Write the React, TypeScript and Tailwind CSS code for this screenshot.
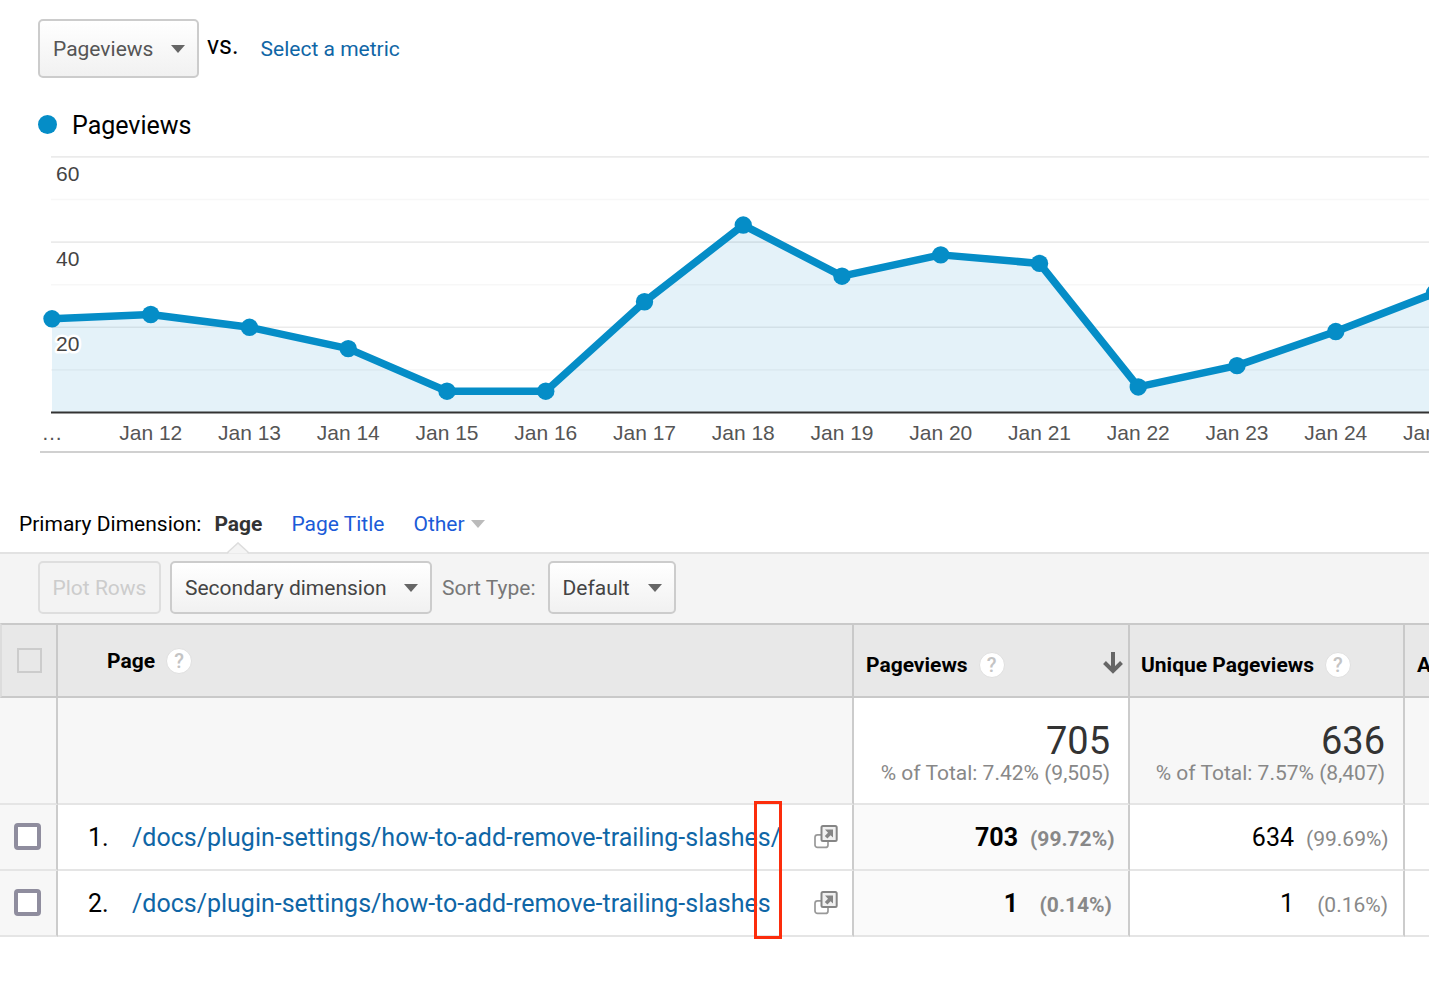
import React from "react";

const points = [
  { label: "…", value: 22 },
  { label: "Jan 12", value: 23 },
  { label: "Jan 13", value: 20 },
  { label: "Jan 14", value: 15 },
  { label: "Jan 15", value: 5 },
  { label: "Jan 16", value: 5 },
  { label: "Jan 17", value: 26 },
  { label: "Jan 18", value: 44 },
  { label: "Jan 19", value: 32 },
  { label: "Jan 20", value: 37 },
  { label: "Jan 21", value: 35 },
  { label: "Jan 22", value: 6 },
  { label: "Jan 23", value: 11 },
  { label: "Jan 24", value: 19 },
  { label: "Jan 25", value: 28 },
];

const BASE = 261.5;
const xAt = (i: number) => 12 + i * 98.75;
const yAt = (v: number) => BASE - v * 4.26;

const rows = [
  { n: "1.", path: "/docs/plugin-settings/how-to-add-remove-trailing-slashes/", views: "703", viewsPct: "(99.72%)", unique: "634", uniquePct: "(99.69%)" },
  { n: "2.", path: "/docs/plugin-settings/how-to-add-remove-trailing-slashes", views: "1", viewsPct: "(0.14%)", unique: "1", uniquePct: "(0.16%)" },
];

function Caret({ className }: { className: string }) {
  return (
    <svg viewBox="0 0 14 8" className={`h-2 w-3.5 ${className}`} fill="currentColor" aria-hidden="true">
      <path d="M0 0h14L7 8z" />
    </svg>
  );
}

function DropDown({ label, className, tone = "text-[#444]" }: { label: string; className: string; tone?: string }) {
  return (
    <div className={`relative shrink-0 ${className}`}>
      <select
        aria-label={label}
        className={`h-full w-full appearance-none rounded-[5px] border-2 border-[#ccc] bg-linear-to-b from-white to-[#f1f1f1] pl-[13px] text-[21px] ${tone}`}
      >
        <option>{label}</option>
      </select>
      <Caret className="pointer-events-none absolute top-1/2 right-3.5 -mt-1 text-[#666]" />
    </div>
  );
}

function Help() {
  return (
    <button
      type="button"
      aria-label="Help"
      className="flex size-[26px] items-center justify-center rounded-full border border-[#e0e0e0] bg-white text-[20px] leading-none font-medium text-[#c4c4c4]"
    >
      ?
    </button>
  );
}

function OpenIcon() {
  return (
    <svg viewBox="0 0 24 24" className="size-6" fill="none" aria-hidden="true">
      <rect x="1" y="9.800" width="13" height="12.600" rx="2.500" stroke="#999" strokeWidth="1.700" fill="#fff" />
      <rect x="7.500" y="1" width="15.200" height="15" rx="1.500" stroke="#858585" strokeWidth="2" fill="#f0f0f0" />
      <path d="M11 4.500h8V12.500l-2.400-2.200-3.200 3.200-2.600-2.600 3.200-3.200z" fill="#858585" />
    </svg>
  );
}

function Chart() {
  const line = points.map((p, i) => `${xAt(i)},${yAt(p.value)}`).join(" ");
  const last = xAt(points.length - 1);
  return (
    <div className="ml-10 overflow-hidden border-b-2 border-[#d0d0d0]">
      <svg width="1500" height="300" className="block max-w-none" role="img" aria-label="Pageviews per day">
        {[60, 50, 40, 30, 20, 10].map((v) => (
          <line key={v} x1="11" x2="1500" y1={yAt(v)} y2={yAt(v)} stroke={v % 20 ? "#f7f7f7" : "#ebebeb"} strokeWidth="1.6" />
        ))}
        <polygon points={`12,${BASE} ${line} ${last},${BASE}`} fill="#058dc7" fillOpacity="0.11" />
        <line x1="11" x2="1500" y1={BASE} y2={BASE} stroke="#333" strokeWidth="2" />
        <polyline points={line} fill="none" stroke="#058dc7" strokeWidth="7.5" strokeLinejoin="round" />
        {points.map((p, i) => (
          <circle key={p.label} cx={xAt(i)} cy={yAt(p.value)} r="8.7" fill="#058dc7" />
        ))}
        <g className="font-['Liberation_Sans',Arial,sans-serif] text-[21px]" fill="#444">
          {[60, 40, 20].map((v) => (
            <text key={v} x="16" y={yAt(v) + 24} stroke="#fff" strokeWidth="5" strokeLinejoin="round" paintOrder="stroke">
              {v}
            </text>
          ))}
          {points.map((p, i) => (
            <text key={p.label} x={xAt(i)} y="289" textAnchor="middle" fill="#555">
              {p.label}
            </text>
          ))}
        </g>
      </svg>
    </div>
  );
}

const head = "border-y-2 border-r-2 border-[#c9c9c9] p-0 text-left font-bold";
const cell = "border-r-2 border-b-2 border-r-[#ccc] border-b-[#e5e5e5] p-0";

export default function App() {
  return (
    <main className="overflow-hidden bg-white pb-14 font-[Roboto,sans-serif] text-[21px] leading-6 text-black">
      <div className="flex items-center pt-[19px] pl-[38px]">
        <DropDown label="Pageviews" className="h-[59px] w-[161px]" tone="text-[#555]" />
        <span className="ml-2 pb-1.5 text-[25px]">vs.</span>
        <a href="#metric" className="ml-[22px] text-[#0f66a6]">Select a metric</a>
      </div>
      <div className="mt-[31px] mb-3 flex h-[30px] items-center gap-[15px] pl-[38px] text-[25px]">
        <span className="size-[19px] rounded-full bg-[#058dc7]" />
        <span className="pt-1">Pageviews</span>
      </div>
      <Chart />

      <nav className="mt-[59px] flex h-[40px] items-start pl-[19px]" aria-label="Primary dimension">
        <span>Primary Dimension:</span>
        <div className="relative ml-[13px] h-full font-bold text-[#333]">
          Page
          <svg viewBox="0 0 22 12" className="absolute bottom-[-2px] left-1/2 z-10 -ml-[11px] h-3 w-[22px]" aria-hidden="true">
            <path d="M1 11.5L11 1.5l10 10z" fill="#f4f4f4" />
            <path d="M0 11L11 1l11 10" fill="none" stroke="#ddd" strokeWidth="1.6" />
          </svg>
        </div>
        <a href="#title" className="ml-[29px] text-[#1b5bd8]">Page Title</a>
        <button type="button" className="ml-[29px] flex items-center gap-1.5 text-[#1b5bd8]">
          Other
          <Caret className="text-[#bbb]" />
        </button>
      </nav>

      <div className="flex h-[71px] items-center border-t-2 border-[#e2e2e2] bg-[#f4f4f4] pb-0.5 pl-[38px]">
        <button type="button" disabled className="h-[53px] w-[123px] rounded-[5px] border-2 border-[#dedede] bg-[#f3f3f3] text-[#ccc]">
          Plot Rows
        </button>
        <DropDown label="Secondary dimension" className="ml-[9px] h-[53px] w-[262px]" />
        <span className="ml-[10px] text-[#777]">Sort Type:</span>
        <DropDown label="Default" className="ml-3 h-[53px] w-[128px]" />
      </div>

      <table className="w-[calc(100%+250px)] table-fixed border-separate border-spacing-0">
        <colgroup>
          <col className="w-[58px]" />
          <col />
          <col className="w-[276px]" />
          <col className="w-[275px]" />
          <col className="w-[274px]" />
        </colgroup>
        <thead>
          <tr className="h-[75px] bg-[#e8e8e8]">
            <th className={`${head} border-l-2 border-l-[#dcdcdc]`}>
              <input type="checkbox" disabled aria-label="Select all rows" className="ml-[15px] block size-[25px] appearance-none border-2 border-[#ccc] bg-[#e8e8e8]" />
            </th>
            <th className={head}>
              <div className="flex items-center gap-[11px] pl-[49px]">Page <Help /></div>
            </th>
            <th className={head}>
              <div className="flex items-center gap-[11px] pt-2 pr-[5px] pl-3">
                Pageviews <Help />
                <svg viewBox="0 0 20 22" className="mb-1 ml-auto h-[22px] w-5" fill="none" stroke="#666" strokeWidth="4" aria-hidden="true">
                  <path d="M10 0v19M1.5 10.5L10 19l8.500-8.500" />
                </svg>
              </div>
            </th>
            <th className={head}>
              <div className="flex items-center gap-[11px] pt-2 pl-[11px]">Unique Pageviews <Help /></div>
            </th>
            <th className={head}>
              <div className="pt-2 pl-3 whitespace-nowrap">Avg. Time on Page</div>
            </th>
          </tr>
        </thead>
        <tbody>
          <tr className="h-[107px] bg-[#f7f7f7] text-right text-[#888]">
            <td className={cell} />
            <td className={cell} />
            <td className={`${cell} bg-white pr-[18px]`}>
              <div className="pt-1 text-[38px] leading-10 text-[#333]">705</div>
              <div>% of Total: 7.42% (9,505)</div>
            </td>
            <td className={`${cell} pr-[18px]`}>
              <div className="pt-1 text-[38px] leading-10 text-[#333]">636</div>
              <div>% of Total: 7.57% (8,407)</div>
            </td>
            <td className={cell} />
          </tr>
          {rows.map((r, i) => (
            <tr key={r.n} className="h-[66px] text-[25px]">
              <td className={`${cell} border-b-[#ccc] bg-[#f7f7f7]`}>
                <input type="checkbox" aria-label={`Select row ${r.n}`} className="mb-0.5 ml-[14px] block size-[27px] appearance-none rounded-[4px] border-4 border-[#8f8d9e] bg-white" />
              </td>
              <td className={`${cell} relative`}>
                <div className="flex items-center pr-[14px] pl-[30px] whitespace-nowrap">
                  <span className="w-[44px] pt-0.5">{r.n}</span>
                  <a href={`#row-${i + 1}`} className="pt-0.5 text-[#0f66a6]">{r.path}</a>
                  <button type="button" aria-label="Open page" className="ml-auto"><OpenIcon /></button>
                </div>
                {i === 0 && (
                  <div className="pointer-events-none absolute -top-1 left-[696px] z-10 h-[138px] w-7 border-[3px] border-[#fc2d0c]" />
                )}
              </td>
              <td className={`${cell} bg-[#fafafa] pr-4 font-bold`}>
                <div className="flex items-baseline justify-end gap-3 pt-0.5">
                  {r.views} <span className="w-[82px] text-right text-[21px] text-[#888]">{r.viewsPct}</span>
                </div>
              </td>
              <td className={`${cell} pr-[15px]`}>
                <div className="flex items-baseline justify-end gap-3 pt-0.5">
                  {r.unique} <span className="w-[82px] text-right text-[21px] text-[#888]">{r.uniquePct}</span>
                </div>
              </td>
              <td className={cell} />
            </tr>
          ))}
        </tbody>
      </table>
    </main>
  );
}
